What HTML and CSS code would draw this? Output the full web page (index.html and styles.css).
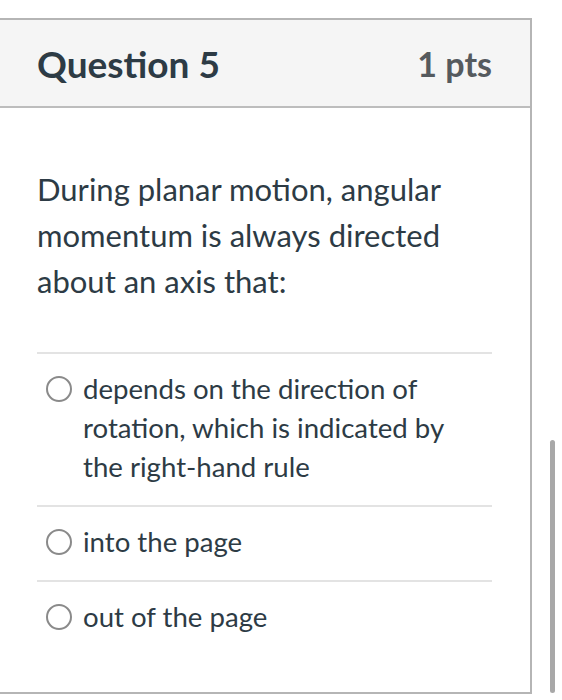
FILE: index.html
```html
<!DOCTYPE html>
<html>
<head>
<meta charset="utf-8">
<link rel="stylesheet" href="styles.css">
</head>
<body>
<div class="page">
  <div class="card">
    <div class="header">
      <div class="title">Question 5</div>
      <div class="pts">1 pts</div>
    </div>
    <div class="content">
      <p class="question">During planar motion, angular momentum is always directed about an axis that:</p>
      <div class="answers">
        <div class="answer">
          <span class="radio"></span>
          <span class="label">depends on the direction of rotation, which is indicated by the right-hand rule</span>
        </div>
        <div class="answer">
          <span class="radio"></span>
          <span class="label">into the page</span>
        </div>
        <div class="answer">
          <span class="radio"></span>
          <span class="label">out of the page</span>
        </div>
      </div>
    </div>
  </div>
  <div class="scrollbar"></div>
</div>
</body>
</html>
```

FILE: styles.css
```css
html, body {
  margin: 0;
  padding: 0;
  background: #ffffff;
  width: 562px;
  height: 700px;
  overflow: hidden;
}
body {
  font-family: Lato, "Open Sans", sans-serif;
  color: #2d3b45;
}
.page {
  position: relative;
  height: 700px;
  padding-top: 18px;
  box-sizing: border-box;
}
.card {
  margin-left: -4px;
  width: 536px;
  height: 676px;
  box-sizing: border-box;
  border: 2px solid #b5b5b5;
}
.header {
  height: 88px;
  box-sizing: border-box;
  background: #f5f5f5;
  border-bottom: 2px solid #bdbdbd;
  display: flex;
  align-items: center;
  justify-content: space-between;
  padding: 0 38px 0 39px;
}
.title {
  font-size: 37px;
  font-weight: 700;
  color: #2d3b45;
}
.pts {
  font-size: 34px;
  font-weight: 700;
  color: #555a5e;
}
.content {
  padding: 58px 38px 0 39px;
}
.question {
  margin: 0;
  font-size: 31px;
  line-height: 46px;
  color: #2d3b45;
}
.answers {
  margin-top: 48px;
  border-top: 2px solid #e3e3e3;
}
.answer {
  display: flex;
  align-items: flex-start;
  gap: 11px;
  padding: 15px 20px 19px 9px;
  border-bottom: 2px solid #e3e3e3;
  font-size: 27.6px;
  line-height: 39px;
}
.answer:last-child {
  border-bottom: none;
}
.radio {
  flex: none;
  width: 26px;
  height: 26px;
  margin-top: 7px;
  box-sizing: border-box;
  border: 2.5px solid #8a8a8a;
  border-radius: 50%;
}
.label {
  color: #2d3b45;
}
.scrollbar {
  position: absolute;
  left: 550px;
  top: 440px;
  width: 5px;
  height: 253px;
  border-radius: 3px;
  background: #a8a8a8;
}
```
